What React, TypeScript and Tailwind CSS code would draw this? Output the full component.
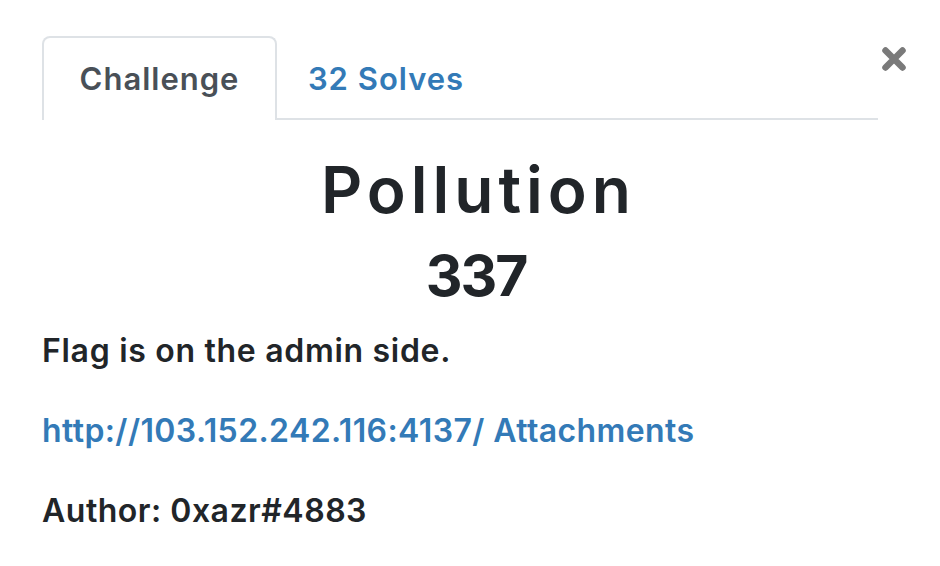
import { useState } from 'react'

type Tab = 'challenge' | 'solves'

export default function App() {
  const [tab, setTab] = useState<Tab>('challenge')

  const tabClass = (active: boolean) =>
    `-mb-[2px] flex h-[84px] items-center justify-center rounded-t-[8px] border-2 border-b-0 text-[31px] font-semibold tracking-[1px] ${
      active ? 'border-[#dee2e6] bg-white text-[#495057]' : 'border-transparent text-[#337ab7]'
    }`

  return (
    <div className="relative h-[566px] w-[940px] bg-white font-['Inter',sans-serif] text-[#212529]">
      <button className="absolute left-[882px] top-[47px] text-[#7a7a7a]" aria-label="Close">
        <svg width="24" height="24" viewBox="0 0 24 24">
          <path d="M3.5 3.5L20.5 20.5M20.5 3.5L3.5 20.5" stroke="currentColor" strokeWidth="6.5" strokeLinecap="round" />
        </svg>
      </button>

      <div className="pl-[42px] pr-[30px] pt-[36px]">
        <div className="flex h-[84px] w-[836px] items-end border-b-2 border-[#dee2e6]">
          <button onClick={() => setTab('challenge')} className={`w-[235px] ${tabClass(tab === 'challenge')}`}>
            Challenge
          </button>
          <button onClick={() => setTab('solves')} className={`w-[218px] ${tabClass(tab === 'solves')}`}>
            32 Solves
          </button>
        </div>

        <h2 className="mt-[31px] pl-[5px] text-center text-[64px] font-semibold leading-[78px] tracking-[5px]">Pollution</h2>
        <h3 className="mt-[15px] text-center text-[57px] font-bold leading-[64px] tracking-[-2px]">337</h3>

        <div className="mt-[23px] text-[32px] font-semibold leading-[40px] tracking-[0.7px]">
          <p>Flag is on the admin side.</p>
          <p className="mt-[40px] tracking-[0.4px]">
            <a href="#" className="text-[#337ab7]">http://103.152.242.116:4137/</a>{' '}
            <a href="#" className="text-[#337ab7]">Attachments</a>
          </p>
          <p className="mt-[40px] tracking-[0.5px]">Author: 0xazr#4883</p>
        </div>
      </div>
    </div>
  )
}
